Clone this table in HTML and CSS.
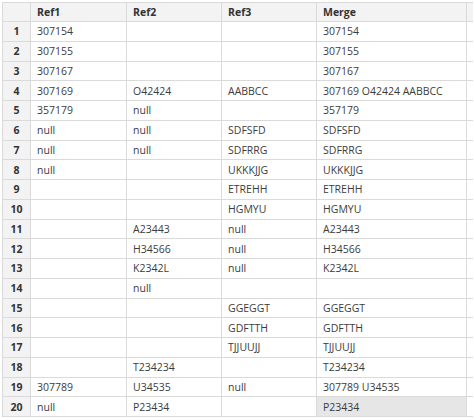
FILE: index.html
```html
<!DOCTYPE html>
<html>
<head>
<meta charset="utf-8">
<link rel="stylesheet" href="styles.css">
</head>
<body>
<div class="grid">
  <div class="hd num"></div><div class="hd">Ref1</div><div class="hd">Ref2</div><div class="hd">Ref3</div><div class="hd">Merge</div><div class="hd"></div>

  <div class="num">1</div><div>307154</div><div></div><div></div><div>307154</div><div></div>
  <div class="num">2</div><div>307155</div><div></div><div></div><div>307155</div><div></div>
  <div class="num">3</div><div>307167</div><div></div><div></div><div>307167</div><div></div>
  <div class="num">4</div><div>307169</div><div>O42424</div><div>AABBCC</div><div>307169 O42424 AABBCC</div><div></div>
  <div class="num">5</div><div>357179</div><div>null</div><div></div><div>357179</div><div></div>
  <div class="num">6</div><div>null</div><div>null</div><div>SDFSFD</div><div>SDFSFD</div><div></div>
  <div class="num">7</div><div>null</div><div>null</div><div>SDFRRG</div><div>SDFRRG</div><div></div>
  <div class="num">8</div><div>null</div><div></div><div>UKKKJJG</div><div>UKKKJJG</div><div></div>
  <div class="num">9</div><div></div><div></div><div>ETREHH</div><div>ETREHH</div><div></div>
  <div class="num">10</div><div></div><div></div><div>HGMYU</div><div>HGMYU</div><div></div>
  <div class="num">11</div><div></div><div>A23443</div><div>null</div><div>A23443</div><div></div>
  <div class="num">12</div><div></div><div>H34566</div><div>null</div><div>H34566</div><div></div>
  <div class="num">13</div><div></div><div>K2342L</div><div>null</div><div>K2342L</div><div></div>
  <div class="num">14</div><div></div><div>null</div><div></div><div></div><div></div>
  <div class="num">15</div><div></div><div></div><div>GGEGGT</div><div>GGEGGT</div><div></div>
  <div class="num">16</div><div></div><div></div><div>GDFTTH</div><div>GDFTTH</div><div></div>
  <div class="num">17</div><div></div><div></div><div>TJJUUJJ</div><div>TJJUUJJ</div><div></div>
  <div class="num">18</div><div></div><div>T234234</div><div></div><div>T234234</div><div></div>
  <div class="num">19</div><div>307789</div><div>U34535</div><div>null</div><div>307789 U34535</div><div></div>
  <div class="num">20</div><div>null</div><div>P23434</div><div></div><div class="sel">P23434</div><div></div>
</div>
</body>
</html>
```

FILE: styles.css
```css
html, body {
  margin: 0;
  padding: 0;
  background: #ffffff;
}
body {
  padding: 2px 0 0 2px;
  font-family: "Open Sans", "Noto Sans", sans-serif;
  font-size: 10.5px;
  color: #3c3c3c;
}
.grid {
  display: grid;
  grid-template-columns: 27px 95px 94px 94px 149px 5px;
  grid-template-rows: 18px repeat(20, 18.75px);
  gap: 1px;
  background: #dadada;
  border: 1px solid #dadada;
  width: max-content;
}
.grid > div {
  background: #ffffff;
  padding-left: 6px;
  display: flex;
  align-items: center;
  white-space: nowrap;
  overflow: hidden;
}
.grid > .hd {
  background: #f3f3f3;
  font-weight: 700;
  color: #333333;
}
.grid > .num {
  background: #f3f3f3;
  font-weight: 700;
  color: #333333;
  justify-content: center;
  padding-left: 0;
}
.grid > .sel {
  background: #e6e6e6;
}
```
